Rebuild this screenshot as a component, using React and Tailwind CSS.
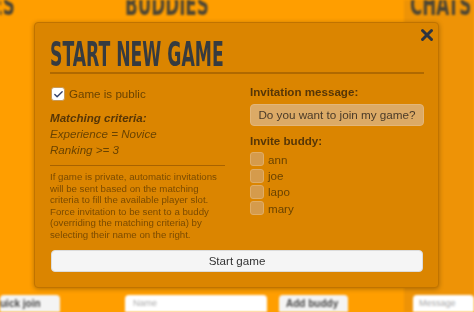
import { X, Check } from "lucide-react";

const sans = "font-['Liberation_Sans',Arial,sans-serif]";
const display = "font-['DejaVu_Sans_Condensed',sans-serif]";

export default function App() {
  const buddies = ["ann", "joe", "lapo", "mary"];

  return (
    <div className={`relative w-[474px] h-[312px] overflow-hidden bg-[#ff9e00] ${sans}`}>
      {/* blurred page behind the dialog */}
      <div className="flex h-full blur-[1.2px]">
        <div className="w-[404px] shrink-0 flex flex-col justify-between">
          <div className="flex h-[16px] items-end overflow-hidden">
            <span className={`${display} inline-block origin-bottom-left scale-x-[0.62] font-bold text-[30px] leading-[22px] text-[#4d4634] -ml-[52px] w-[177px] shrink-0`}>GAMES</span>
            <span className={`${display} inline-block origin-bottom-left scale-x-[0.62] font-bold text-[30px] leading-[22px] text-[#4d4634] shrink-0`}>BUDDIES</span>
          </div>
          <div className="flex items-end h-[17px]">
            <div className="w-[60px] h-[17px] bg-[#f4f4f4] rounded-t-sm text-[10px] text-[#444] font-bold leading-[17px]">uick join</div>
            <div className="ml-[65px] w-[142px] h-[17px] bg-white rounded-t-sm text-[9px] text-[#aaa] pl-[8px] leading-[17px]">Name</div>
            <div className="ml-[12px] w-[69px] h-[17px] bg-[#f4f4f4] rounded-t-sm text-[10px] text-[#444] pl-[7px] font-bold leading-[17px]">Add buddy</div>
          </div>
        </div>
        <div className="flex-1 min-w-0 overflow-hidden bg-[#ee9306] flex flex-col justify-between">
          <div className="h-[16px] flex items-end overflow-hidden">
            <span className={`${display} inline-block origin-bottom-left scale-x-[0.62] font-bold text-[30px] leading-[22px] text-[#4d4634] ml-[6px] shrink-0`}>CHATS</span>
          </div>
          <div className="h-[17px] flex items-end pl-[9px]">
            <div className="flex-1 h-[17px] bg-white rounded-t-sm text-[9px] text-[#aaa] pl-[6px] leading-[17px]">Message</div>
          </div>
        </div>
      </div>

      {/* dialog */}
      <div className="absolute left-[34px] top-[22px] w-[405px] h-[266px] bg-[#db8500] border border-[#c07300] rounded-[4px] shadow-[0_1px_5px_rgba(0,0,0,0.3)] pl-[15px] pr-[14px] pt-[13px]">
        <button className="absolute right-[2px] top-[2.5px] text-[#2b3442]">
          <X size={18} strokeWidth={4} />
        </button>
        <h1 className="border-b-2 border-[#b06900] h-[38px]">
          <span className={`${display} inline-block origin-left scale-x-[0.58] font-bold text-[33px] leading-[37px] text-[#363b40] whitespace-nowrap`}>
            START NEW GAME
          </span>
        </h1>

        <div className="flex items-start">
          <div className="w-[175px]">
            <label className="mt-[13px] flex items-center gap-[4px] text-[11.6px] leading-[14px] text-[#6a4300]">
              <span className="ml-px w-[14px] h-[14px] bg-white rounded-[3px] border border-[#c79a5a] flex items-center justify-center">
                <Check size={11} strokeWidth={3} className="text-[#34406a]" />
              </span>
              Game is public
            </label>
            <div className="mt-[9px] text-[11.6px] leading-[16px] italic text-[#6a4300]">
              <div className="font-bold text-[#573606]">Matching criteria:</div>
              <div>Experience = Novice</div>
              <div>Ranking &gt;= 3</div>
            </div>
            <div className="mt-[7px] h-px bg-[#a86300]" />
            <p className="mt-[5px] text-[9.7px] leading-[11.6px] text-[#7b4b00]">
              If game is private, automatic invitations will be sent based on the matching criteria to fill the available player slot. Force invitation to be sent to a buddy (overriding the matching criteria) by selecting their name on the right.
            </p>
          </div>

          <div className="ml-[25px] flex-1">
            <div className="mt-[10px] text-[11.6px] font-bold text-[#573606] leading-[16px]">Invitation message:</div>
            <div className="mt-[4px] h-[22px] rounded-[4px] bg-[#dcaa66] border border-[#e3b679] flex items-center justify-center text-[11.7px] text-[#4a3a28]">
              Do you want to join my game?
            </div>
            <div className="mt-[7px] text-[11.6px] font-bold text-[#573606] leading-[16px]">Invite buddy:</div>
            <div className="mt-[2px] flex flex-col">
              {buddies.map((b) => (
                <label key={b} className="h-[16.4px] flex items-center gap-[4px] text-[11.6px] text-[#6a4300]">
                  <span className="w-[14px] h-[14px] rounded-[3px] bg-[#d59b4c] border border-[#e0ad66]" />
                  {b}
                </label>
              ))}
            </div>
          </div>
        </div>

        <button className="mt-[9px] ml-px w-[372px] h-[22px] rounded-[4px] bg-[#f5f5f5] border border-[#dcdcdc] text-[11.6px] text-[#333]">
          Start game
        </button>
      </div>
    </div>
  );
}
